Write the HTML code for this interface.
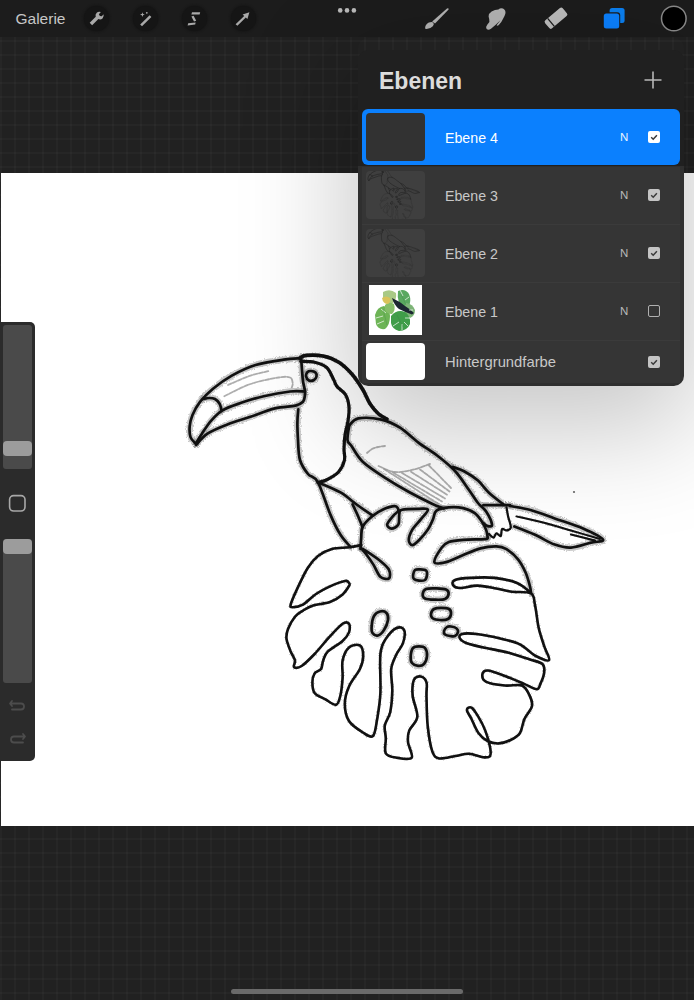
<!DOCTYPE html>
<html><head><meta charset="utf-8">
<style>
*{margin:0;padding:0;box-sizing:border-box}
html,body{width:694px;height:1000px;overflow:hidden;background:#232323;font-family:"Liberation Sans",sans-serif}
#bg{position:absolute;left:0;top:0;width:694px;height:1000px;background-color:#212121;
background-image:linear-gradient(90deg,rgba(255,255,255,0.022) 2px,transparent 2px),linear-gradient(0deg,rgba(255,255,255,0.022) 2px,transparent 2px);
background-size:14px 14px}
#top{position:absolute;left:0;top:0;width:694px;height:37px;background:#1c1c1c}
#canvas{position:absolute;left:1px;top:173px;width:693px;height:653px;background:#fff;overflow:hidden}
#shadow{position:absolute;left:358px;top:38px;width:326px;height:348px;border-radius:10px;box-shadow:0 35px 110px 10px rgba(0,0,0,0.22)}
#panel{position:absolute;left:358px;top:38px;width:326px;height:348px;background:transparent;border-radius:10px;overflow:hidden}
#panel .head{position:absolute;left:0;top:12px;width:326px;height:117px;background:#202020;border-radius:10px 10px 0 0}
#panel .body{position:absolute;left:0;top:128px;width:326px;height:220px;background:#2f2f2f}
.sep{position:absolute;left:4px;width:318px;height:1px;background:#3b3b3b}
.hdr{position:absolute;left:21px;top:29.5px;font-size:23px;font-weight:bold;color:#dcdcdc}
.row{position:absolute;left:4px;width:318px;height:57px;background:#353535}
.row.sel{background:#0b80fe;border-radius:6px;left:4px;width:318px;height:56px}
.thumb{position:absolute;left:4px;top:4px;width:59px;height:48px;background:#3f3f3f;border-radius:4px}
.lname{position:absolute;left:83px;top:20.5px;font-size:14.2px;color:#c8c8c8}
.sel .lname{color:#fff}
.N{position:absolute;left:258px;top:22px;font-size:11.5px;color:#b8b8b8}
.sel .N{color:#e8f2ff}
.cb{position:absolute;left:286px;top:22px;width:12px;height:12px;background:#c4c4c4;border-radius:2px}
.sel .cb{background:#fff}
.cb svg{position:absolute;left:0;top:0}
.cb.off{background:transparent;border:1.4px solid #b0b0b0}
#side{position:absolute;left:0;top:322px;width:35px;height:439px;background:#2b2b2b;border-radius:0 5px 5px 0}
.track{position:absolute;left:3px;width:29px;background:#4a4a4a;border-radius:3px}
.handle{position:absolute;left:3px;width:29px;height:15px;background:#9c9c9c;border-radius:4px}
.ico{position:absolute;top:6px;width:25px;height:25px;border-radius:50%;background:#151515;box-shadow:0 0 2px 1px #161616}
#home{position:absolute;left:231px;top:989px;width:232px;height:5px;border-radius:3px;background:#6a6a6a}
</style></head><body>
<div id="bg"></div>
<div id="top">
  <div style="position:absolute;left:15.5px;top:10px;font-size:15.5px;color:#c6c6c6">Galerie</div>
  <div class="ico" style="left:84px"></div>
  <div class="ico" style="left:133px"></div>
  <div class="ico" style="left:182px"></div>
  <div class="ico" style="left:231px"></div>
  <svg width="694" height="37" style="position:absolute;left:0;top:0">
    <g fill="#a9a9a9" stroke="none">
      <!-- wrench -->
      <g transform="translate(96.5 18.5) scale(0.82) translate(-96.5 -18.5)"><path d="M88.2 23.6 L95.6 16.4 A4.6 4.6 0 0 1 101.8 10.6 L99.4 13.2 L100.6 15.4 L103 15.8 L105 13.4 A4.6 4.6 0 0 1 98.8 19.2 L91.2 26.6 Z"/></g>
      <!-- wand -->
      <path d="M140.2 24.4 L149.6 15.2 L151.4 17 L142 26.2 Z"/>
      <path d="M142.4 12.2 L143 14 L144.8 14.6 L143 15.2 L142.4 17 L141.8 15.2 L140 14.6 L141.8 14 Z"/>
      <circle cx="146.8" cy="12.8" r="0.9"/>
      <!-- S selection -->
      <path d="M192 12.2 L200.2 12.2 L199.6 14.4 L191.4 14.4 Z"/>
      <path d="M191.4 16.4 L193.6 15.8 L196.2 20.8 L194 21.6 Z"/>
      <path d="M188.2 23.2 L195.6 22.4 L195.2 24.6 L187.6 25.4 Z"/>
      <!-- arrow -->
      <path d="M235.6 24.2 L244.2 16 L242.6 14.4 L249.4 12.2 L247.4 19 L245.8 17.4 L237.4 25.8 Z"/>
    </g>
    <g fill="#b9b9b9"><circle cx="340.2" cy="10.4" r="2.3"/><circle cx="347" cy="10.4" r="2.3"/><circle cx="353.9" cy="10.4" r="2.3"/></g>
    <g fill="#b4b4b4">
      <!-- brush -->
      <path d="M432.2 21.4 L447 8.4 Q448.8 7.6 448.6 9.4 L435 23.6 Z"/>
      <path d="M425.2 28.8 Q424.6 25 428.8 22.6 Q431.6 21.4 433.2 22.4 Q434.6 24 432.8 26.2 Q429.8 29.4 425.2 28.8 Z"/>
      <!-- smudge finger -->
      <path d="M486.6 29 Q485.6 26.6 487.4 24.6 L489.4 22 Q489.6 19.4 488.6 16.4 Q488.8 13 491.6 11.4 Q495 9.6 498.4 9.4 Q500.6 7.6 503 8.6 Q506 10.4 505.4 13.4 Q504.6 16.2 503.2 18.6 Q501.6 22.4 498.8 25 Q497.4 26.2 496.6 25.2 L500.4 20.2 L496 24.4 L491 28.8 Q488.4 30.4 486.6 29 Z"/>
    </g>
    <!-- eraser -->
    <g transform="translate(556 18.2) rotate(-40)">
      <rect x="-11.5" y="-5.2" width="23" height="10.4" rx="2" fill="#bdbdbd"/>
      <rect x="-7.2" y="-5.2" width="1.3" height="10.4" fill="#1c1c1c"/>
    </g>
    <!-- layers -->
    <rect x="609.6" y="8" width="15" height="15" rx="2.5" fill="#0b7ff0"/>
    <rect x="602.6" y="12.2" width="17.6" height="17.2" rx="3" fill="#1c1c1c"/>
    <rect x="603.8" y="13.4" width="15.4" height="15" rx="2.5" fill="#0b80fe"/>
    <!-- color -->
    <circle cx="673.8" cy="18.5" r="12.3" fill="#000" stroke="#8a8a8a" stroke-width="1.5"/>
  </svg>
</div>
<div id="canvas"></div>
<svg id="draw" width="694" height="1000" viewBox="0 0 694 1000" style="position:absolute;left:0;top:0"><defs><g id="art"><path d="M196.0 444.0 C195.1 442.9 191.7 440.4 190.6 437.4 C189.5 434.4 189.4 429.9 189.7 426.2 C190.0 422.5 190.8 419.1 192.5 415.0 C194.2 410.9 196.6 406.2 200.0 401.8 C203.4 397.4 207.7 393.1 213.0 388.7 C218.3 384.3 224.7 379.6 231.8 375.6 C238.9 371.7 246.9 367.6 255.6 365.0 C264.2 362.4 276.3 360.8 283.7 359.7 C291.1 358.6 297.3 358.5 300.0 358.3"/><path d="M301.0 357.0 C301.2 359.2 301.7 366.0 302.0 370.0 C302.3 374.0 302.5 377.8 303.0 381.2 C303.5 384.6 304.6 388.2 304.9 390.6 C305.2 393.0 305.2 393.4 304.9 395.3 C304.6 397.2 304.6 400.1 303.0 401.8 C301.4 403.5 300.2 404.5 295.5 405.6 C290.8 406.7 282.4 406.5 274.9 408.4 C267.4 410.3 258.3 414.1 250.5 416.8 C242.7 419.5 235.2 421.5 228.0 424.3 C220.8 427.1 212.8 430.3 207.5 433.7 C202.2 437.1 198.1 443.0 196.2 444.9"/><path d="M304.9 391.5 C302.4 391.5 296.9 390.7 290.0 391.5 C283.1 392.3 271.8 394.3 263.7 396.2 C255.6 398.1 248.1 400.4 241.2 402.8 C234.3 405.2 227.5 407.3 222.5 410.3 C217.5 413.3 214.6 416.7 211.2 420.6 C207.8 424.5 204.4 430.0 201.9 433.7 C199.4 437.4 197.1 441.4 196.2 443.0"/><path d="M202.8 399.0 C203.9 398.8 207.3 398.0 209.3 398.0 C211.3 398.0 213.3 398.1 215.0 399.0 C216.7 399.9 218.5 401.8 219.6 403.7 C220.7 405.6 221.2 409.2 221.5 410.3"/><path d="M306.0 376.0 C305.8 374.6 306.7 372.8 307.5 372.0 C308.3 371.2 309.7 370.9 311.0 371.0 C312.3 371.1 314.6 371.6 315.5 372.5 C316.4 373.4 316.8 375.2 316.5 376.5 C316.2 377.8 315.2 379.3 314.0 380.0 C312.8 380.7 310.3 381.2 309.0 380.5 C307.7 379.8 306.2 377.4 306.0 376.0Z"/><path d="M300.0 358.0 C301.0 357.6 302.2 355.7 306.0 355.4 C309.8 355.1 317.5 354.9 323.0 356.0 C328.5 357.1 333.9 359.1 338.8 362.3 C343.8 365.5 348.7 370.4 352.7 375.0 C356.7 379.6 360.1 385.2 363.0 390.0 C365.9 394.8 367.4 399.8 370.0 403.8 C372.6 407.8 375.8 411.5 378.6 414.0 C381.4 416.5 385.6 418.2 387.0 419.0" stroke-width="3.6"/><path d="M300.7 361.4 C303.0 361.5 310.3 361.3 314.6 362.3 C318.9 363.3 323.5 364.6 326.7 367.5 C329.9 370.4 331.9 376.4 333.6 379.6 C335.3 382.8 335.0 383.9 337.0 386.5 C339.0 389.1 343.7 391.6 345.7 395.0 C347.7 398.4 348.6 402.7 349.0 407.0 C349.4 411.3 348.7 416.3 348.0 421.0 C347.3 425.7 345.7 430.3 345.0 435.0 C344.3 439.7 344.1 444.8 344.0 449.0 C343.9 453.2 345.4 456.2 344.5 460.0 C343.6 463.8 341.5 468.7 338.5 472.0 C335.5 475.3 329.8 478.3 326.4 480.0 C323.0 481.7 319.4 481.9 318.0 482.3" stroke-width="3.2"/><path d="M298.3 409.3 C298.1 411.5 297.4 417.3 297.4 422.4 C297.3 427.5 297.6 433.7 298.0 440.0 C298.4 446.3 298.3 454.3 300.0 460.0 C301.7 465.7 305.0 470.3 308.0 474.0 C311.0 477.7 314.3 475.5 318.0 482.3 C321.7 489.1 326.6 505.9 330.4 514.6 C334.1 523.4 337.1 529.4 340.5 534.8 C343.9 540.2 348.9 545.0 350.6 547.0"/><path d="M318.0 482.3 C321.8 484.0 334.1 488.7 340.5 492.4 C346.9 496.1 351.2 500.6 356.6 504.5 C362.0 508.4 370.0 513.8 372.7 515.6"/><path d="M352.6 504.5 C353.5 506.4 356.4 512.2 358.0 516.0 C359.6 519.8 361.8 525.2 362.5 527.0"/><path d="M349.2 425.4 C350.7 424.2 353.0 419.4 358.4 418.4 C363.8 417.4 374.6 418.1 381.5 419.6 C388.4 421.2 393.9 423.9 400.0 427.7 C406.1 431.5 412.3 438.0 418.4 442.6 C424.5 447.2 430.7 450.6 436.8 455.3 C442.9 460.0 449.6 465.2 455.0 471.0 C460.4 476.8 465.2 484.7 469.0 490.0 C472.8 495.3 475.1 499.4 478.0 503.0 C480.9 506.6 484.0 508.1 486.3 511.7 C488.6 515.3 491.8 522.3 492.0 524.7 C492.2 527.1 489.1 526.4 487.7 526.1 C486.3 525.9 484.1 523.7 483.4 523.2"/><path d="M349.2 425.4 C348.9 427.8 347.1 436.6 347.5 440.0 C347.9 443.4 348.9 442.3 351.5 446.0 C354.1 449.7 357.2 456.6 363.0 462.0 C368.8 467.4 378.3 473.4 386.0 478.4 C393.7 483.4 401.3 487.8 409.0 492.0 C416.7 496.2 426.2 501.0 432.0 503.7 C437.8 506.4 441.8 507.6 443.7 508.4"/><path d="M453.0 467.0 C454.9 467.8 460.3 469.2 464.5 471.5 C468.7 473.8 473.9 477.0 478.0 480.6 C482.1 484.2 484.9 489.0 489.2 493.0 C493.5 497.0 501.2 502.6 503.6 504.5"/><path d="M483.4 505.2 C487.8 505.2 505.6 505.2 510.0 505.2"/><path d="M510.0 506.0 C513.4 506.7 523.0 507.9 530.5 510.0 C538.0 512.1 546.0 515.3 554.7 518.4 C563.5 521.5 575.0 525.0 583.0 528.5 C591.0 532.0 601.7 537.2 603.0 539.6 C604.3 542.0 596.3 541.3 591.0 542.6 C585.7 543.9 577.0 547.3 571.0 547.6 C565.0 547.9 560.8 546.8 554.7 544.6 C548.6 542.4 541.2 537.5 534.5 534.5 C527.8 531.5 517.8 527.8 514.4 526.5"/><path d="M516.4 516.4 C521.2 517.5 535.9 520.6 545.0 523.0 C554.1 525.4 561.8 527.8 571.0 530.5 C580.2 533.2 595.2 537.6 600.0 539.0" stroke-width="2.0"/><path d="M571.0 534.5 C575.0 535.5 591.0 539.6 595.0 540.6" stroke-width="2.2"/><path d="M506.5 507.4 C506.8 508.8 507.3 512.6 508.0 516.0 C508.7 519.4 511.1 525.1 510.8 527.5 C510.6 529.9 507.9 530.1 506.5 530.4 C505.1 530.6 503.1 528.0 502.1 529.0 C501.1 530.0 501.6 535.5 500.7 536.2 C499.8 536.9 497.6 533.1 496.4 533.3 C495.2 533.5 494.7 537.5 493.5 537.6 C492.3 537.7 489.8 534.6 489.0 534.0" stroke-width="2.2"/><path d="M360.5 549.0 C360.6 547.2 360.8 541.7 361.2 538.0 C361.6 534.3 360.8 530.4 362.7 526.7 C364.6 523.0 368.9 519.0 372.5 516.0 C376.1 513.0 380.9 510.4 384.6 508.8 C388.4 507.2 392.7 505.9 395.0 506.2 C397.3 506.5 398.7 509.0 398.4 510.6 C398.1 512.2 395.1 513.5 393.2 515.8 C391.3 518.1 387.5 522.2 387.2 524.4 C386.9 526.5 389.6 528.7 391.5 528.7 C393.4 528.7 397.1 526.9 398.4 524.4 C399.7 521.9 398.7 516.5 399.3 514.0 C399.9 511.6 398.7 510.6 402.0 509.7 C405.3 508.8 414.9 508.8 419.2 508.8 C423.5 508.8 427.6 508.0 427.9 509.7 C428.2 511.4 423.6 515.9 421.0 519.2 C418.4 522.5 414.3 526.1 412.3 529.6 C410.3 533.1 408.8 537.4 408.8 540.0 C408.8 542.6 410.6 545.2 412.3 545.2 C414.0 545.2 416.6 542.6 419.2 540.0 C421.8 537.4 425.6 533.1 427.9 529.6 C430.2 526.1 431.6 522.4 433.0 519.2 C434.4 516.0 433.9 512.6 436.5 510.6 C439.1 508.6 444.4 507.8 448.8 507.4 C453.2 507.0 458.9 507.2 463.2 508.1 C467.5 509.1 471.7 510.8 474.8 513.1 C477.9 515.4 480.1 518.9 482.0 521.8 C483.9 524.7 485.4 527.8 486.3 530.4 C487.2 533.0 487.5 536.4 487.7 537.6"/><path d="M361.0 548.0 C361.8 549.0 363.9 551.2 366.0 554.0 C368.1 556.8 371.0 560.8 373.4 564.6 C375.8 568.4 377.7 574.4 380.3 576.7 C382.9 579.0 387.6 579.5 389.0 578.4 C390.4 577.2 390.4 572.7 389.0 569.8 C387.6 566.9 384.6 564.5 380.3 561.0 C376.0 557.5 365.9 551.0 363.0 549.0"/><path d="M487.7 537.6 C487.2 537.9 488.9 538.7 484.8 539.1 C480.7 539.5 469.2 539.3 463.2 539.8 C457.2 540.3 452.4 540.7 448.8 542.0 C445.2 543.3 444.0 544.4 441.6 547.7 C439.2 551.1 433.7 559.7 434.4 562.1 C435.1 564.5 441.2 563.3 446.0 562.1 C450.8 560.9 457.4 557.3 463.2 555.0 C468.9 552.7 475.0 549.9 480.5 548.4 C486.0 546.9 492.1 546.2 496.4 546.3 C500.7 546.4 502.9 547.0 506.5 549.2 C510.1 551.4 514.8 555.4 518.0 559.3 C521.2 563.2 523.7 568.2 525.7 572.7 C527.7 577.2 529.1 583.1 530.0 586.5 C530.9 589.9 530.8 591.9 531.0 593.0"/><path d="M531.0 593.0 C528.7 591.3 523.1 585.5 517.0 583.0 C510.9 580.5 502.4 578.8 494.6 577.9 C486.8 577.0 477.0 577.5 470.4 577.9 C463.8 578.2 457.9 578.8 455.0 580.0 C452.1 581.2 452.2 583.7 453.0 585.0 C453.8 586.3 455.9 587.9 460.0 588.0 C464.1 588.1 471.5 585.6 477.3 585.6 C483.1 585.6 488.8 587.2 494.6 588.2 C500.4 589.2 505.9 590.8 512.0 591.7 C518.1 592.6 527.2 591.2 531.0 593.4 C534.8 595.6 533.7 599.3 535.0 605.0 C536.3 610.7 537.1 620.6 538.6 627.5 C540.1 634.4 542.5 640.8 544.2 646.2 C545.9 651.7 550.5 658.7 549.0 660.2 C547.5 661.8 539.8 658.1 534.9 655.5 C530.0 652.9 525.5 647.1 519.9 644.3 C514.3 641.5 508.4 640.4 501.2 638.7 C494.0 637.0 483.4 634.8 476.8 634.0 C470.2 633.2 464.6 633.2 461.8 634.0 C459.0 634.8 459.1 637.1 460.0 638.7 C460.9 640.3 463.1 641.9 467.5 643.4 C471.9 644.9 479.3 646.5 486.2 648.0 C493.1 649.5 501.5 650.8 508.7 652.7 C515.9 654.6 523.7 657.4 529.3 659.3 C534.9 661.2 539.9 661.8 542.4 664.0 C544.9 666.2 544.5 669.1 544.2 672.4 C543.9 675.7 541.8 680.8 540.5 683.6 C539.2 686.4 539.5 689.3 536.7 689.3 C533.9 689.3 528.9 685.8 523.6 683.6 C518.3 681.4 510.8 678.2 504.9 676.0 C499.0 673.8 491.8 670.8 488.0 670.5 C484.2 670.2 482.7 672.4 482.4 674.3 C482.1 676.2 482.4 679.9 486.2 681.8 C489.9 683.7 499.0 684.9 504.9 685.5 C510.8 686.1 517.7 683.9 521.8 685.5 C525.9 687.1 527.6 691.5 529.3 694.9 C531.0 698.3 532.8 702.0 532.0 706.0 C531.2 710.0 526.4 714.5 524.4 719.0 C522.4 723.5 522.3 729.5 520.0 733.0 C517.7 736.5 514.1 738.3 510.6 740.0 C507.1 741.7 502.8 743.2 499.0 743.4 C495.2 743.6 491.0 742.7 487.6 741.0 C484.2 739.3 481.1 736.7 478.4 733.0 C475.7 729.3 473.4 722.8 471.5 719.0 C469.6 715.2 466.9 711.9 466.9 710.0 C466.9 708.1 469.6 706.5 471.5 707.6 C473.4 708.7 476.1 713.0 478.4 716.8 C480.7 720.6 483.4 725.6 485.3 730.6 C487.2 735.6 489.2 742.6 490.0 746.8 C490.8 751.0 491.2 754.3 490.0 756.0 C488.8 757.7 486.5 757.6 483.0 757.2 C479.5 756.8 473.6 753.9 469.0 753.7 C464.4 753.5 460.3 755.2 455.3 756.0 C450.3 756.8 443.0 759.2 439.2 758.4 C435.4 757.6 434.2 756.8 432.3 751.4 C430.4 746.0 428.7 735.2 427.7 726.0 C426.7 716.8 426.7 703.3 426.5 696.0 C426.3 688.7 427.5 685.5 426.5 682.3 C425.5 679.0 422.8 676.9 420.7 676.5 C418.6 676.1 415.1 676.8 413.8 680.0 C412.5 683.2 412.1 689.9 412.7 696.0 C413.3 702.1 417.9 711.0 417.3 716.8 C416.7 722.6 410.8 726.4 409.2 730.6 C407.6 734.8 407.6 737.7 408.0 742.2 C408.4 746.7 413.6 755.1 411.7 757.7 C409.8 760.3 400.9 758.4 396.6 757.7 C392.3 757.0 387.6 756.5 385.8 753.3 C384.0 750.0 386.0 742.9 385.8 738.2 C385.6 733.5 384.1 729.6 384.8 725.3 C385.5 721.0 388.9 718.1 390.2 712.3 C391.4 706.5 392.1 697.9 392.3 690.7 C392.5 683.5 390.5 675.1 391.2 669.0 C391.9 662.9 394.6 658.3 396.6 654.0 C398.6 649.7 401.7 647.2 403.0 643.2 C404.3 639.2 405.3 632.7 404.2 630.2 C403.1 627.7 399.7 626.5 396.6 628.0 C393.5 629.5 388.5 634.6 385.8 638.9 C383.1 643.2 381.3 645.0 380.4 654.0 C379.5 663.0 380.9 682.1 380.4 692.9 C379.9 703.7 378.4 711.6 377.2 718.8 C375.9 726.0 375.4 733.8 372.9 736.0 C370.4 738.2 366.0 734.3 362.0 731.8 C358.0 729.3 351.9 725.7 349.0 721.0 C346.1 716.3 344.8 709.5 344.8 703.7 C344.8 697.9 346.5 692.2 349.0 686.4 C351.5 680.6 357.5 674.1 359.9 669.0 C362.3 663.9 363.2 659.9 363.2 656.0 C363.2 652.1 362.3 646.8 359.9 645.4 C357.5 644.0 351.9 645.0 349.0 647.5 C346.1 650.0 343.7 655.5 342.6 660.5 C341.5 665.5 343.0 672.0 342.6 677.8 C342.2 683.5 341.6 690.5 340.5 695.0 C339.4 699.5 338.7 704.1 336.2 704.8 C333.7 705.5 329.0 701.4 325.4 699.4 C321.8 697.4 316.8 695.9 314.6 693.0 C312.4 690.1 312.4 685.3 312.4 682.0 C312.4 678.7 313.2 675.6 314.6 673.4 C316.0 671.2 319.6 671.1 321.0 669.0 C322.4 666.9 322.1 663.4 323.2 660.5 C324.3 657.6 324.3 655.0 327.5 651.8 C330.7 648.5 339.0 644.2 342.6 641.0 C346.2 637.8 347.9 635.3 349.0 632.4 C350.1 629.5 350.1 625.2 349.0 623.8 C347.9 622.4 345.8 621.6 342.6 623.8 C339.4 625.9 334.4 631.7 329.7 636.7 C325.0 641.7 319.3 649.1 314.6 654.0 C309.9 658.9 305.0 663.8 301.6 666.0 C298.2 668.2 295.1 667.9 294.0 667.0 C292.9 666.1 295.5 663.0 295.0 660.5 C294.5 658.0 292.2 655.4 290.8 651.8 C289.4 648.2 287.0 642.7 286.5 638.9 C286.0 635.1 286.6 632.7 288.0 629.0 C289.4 625.3 292.5 619.8 295.0 616.7 C297.5 613.6 300.0 612.5 303.0 610.6 C306.0 608.7 308.7 606.8 313.2 605.4 C317.7 604.0 325.2 603.7 330.0 602.0 C334.8 600.3 338.8 597.7 342.0 595.0 C345.2 592.3 347.8 588.0 349.0 586.0 C350.2 584.0 349.7 583.8 349.0 583.0 C348.3 582.2 348.2 580.4 345.0 581.0 C341.8 581.6 334.8 584.2 330.0 586.4 C325.2 588.6 320.5 591.0 316.0 594.0 C311.5 597.0 306.9 602.4 303.0 604.6 C299.1 606.8 294.6 607.2 292.5 607.2 C290.4 607.2 290.1 607.2 290.7 604.6 C291.3 602.0 293.1 597.7 295.9 591.6 C298.7 585.5 304.0 573.9 307.7 568.0 C311.4 562.1 314.0 559.2 318.0 556.0 C322.0 552.8 326.7 550.5 331.9 549.0 C337.1 547.5 344.3 548.0 349.2 547.3 C354.1 546.6 359.2 545.4 361.2 545.0" stroke-width="2.6"/><path d="M413.1 575.0 C413.3 573.5 413.9 570.9 415.0 570.0 C416.1 569.1 418.2 569.3 420.0 569.4 C421.8 569.5 424.8 569.6 426.0 570.5 C427.2 571.4 427.2 573.4 427.0 575.0 C426.8 576.6 426.3 579.1 425.0 580.0 C423.7 580.9 420.8 580.8 419.0 580.6 C417.2 580.4 415.0 579.9 414.0 579.0 C413.0 578.1 412.9 576.5 413.1 575.0Z"/><path d="M422.7 594.0 C422.9 592.4 423.8 589.9 426.0 589.0 C428.2 588.1 432.7 588.3 436.0 588.4 C439.3 588.5 443.9 588.6 446.0 589.5 C448.1 590.4 448.8 592.4 448.6 594.0 C448.4 595.6 447.3 598.0 445.0 599.0 C442.7 600.0 438.3 599.8 435.0 599.7 C431.7 599.6 427.1 599.5 425.0 598.5 C422.9 597.5 422.5 595.6 422.7 594.0Z"/><path d="M431.0 614.0 C431.2 612.4 432.3 610.0 434.0 609.0 C435.7 608.0 438.5 607.8 441.0 607.8 C443.5 607.8 447.3 608.0 449.0 609.0 C450.7 610.0 451.2 612.3 451.0 614.0 C450.8 615.7 449.8 618.0 448.0 619.0 C446.2 620.0 442.5 620.1 440.0 620.0 C437.5 619.9 434.5 619.5 433.0 618.5 C431.5 617.5 430.8 615.6 431.0 614.0Z"/><path d="M444.0 631.0 C444.3 629.8 445.8 627.8 447.0 627.0 C448.2 626.2 449.5 626.3 451.0 626.5 C452.5 626.7 454.8 627.1 456.0 628.0 C457.2 628.9 458.2 630.7 458.0 632.0 C457.8 633.3 456.3 635.3 455.0 636.0 C453.7 636.7 451.7 636.2 450.0 636.0 C448.3 635.8 446.0 635.3 445.0 634.5 C444.0 633.7 443.7 632.2 444.0 631.0Z"/><path d="M371.7 626.0 C371.9 623.2 372.6 618.4 374.0 616.0 C375.4 613.6 377.9 612.0 380.0 611.5 C382.1 611.0 385.2 611.6 386.5 613.0 C387.8 614.4 388.4 617.2 388.0 620.0 C387.6 622.8 385.7 627.4 384.0 630.0 C382.3 632.6 379.9 635.0 378.0 635.5 C376.1 636.0 373.6 634.6 372.5 633.0 C371.4 631.4 371.4 628.8 371.7 626.0Z"/><path d="M410.7 656.0 C410.9 653.5 411.6 649.6 413.0 648.0 C414.4 646.4 417.0 646.4 419.0 646.4 C421.0 646.4 423.7 646.4 425.0 648.0 C426.3 649.6 427.2 653.3 427.0 656.0 C426.8 658.7 425.5 662.4 424.0 664.0 C422.5 665.6 420.0 666.1 418.0 665.9 C416.0 665.7 413.2 664.6 412.0 663.0 C410.8 661.4 410.5 658.5 410.7 656.0Z"/></g></defs><g fill="none" stroke-linecap="round" stroke-linejoin="round"><defs><filter id="rough" x="-5%" y="-5%" width="110%" height="110%"><feTurbulence type="fractalNoise" baseFrequency="0.9" numOctaves="2" seed="3" result="n"/><feDisplacementMap in="SourceGraphic" in2="n" scale="4" xChannelSelector="R" yChannelSelector="G"/></filter></defs><g filter="url(#rough)"><use href="#art" stroke="#666" stroke-opacity="0.36" stroke-width="6.5"/></g></g><g fill="none" stroke="#9a9a9a" stroke-width="1.8" stroke-opacity="0.8" stroke-linecap="round" stroke-dasharray="4 1.5"><path d="M224.3 396.2 C228.7 394.2 241.4 387.1 250.5 384.0 C259.6 380.9 272.0 378.6 278.6 377.5 C285.2 376.4 287.6 376.6 290.0 377.5 C292.4 378.4 292.4 381.4 292.7 383.1 C293.0 384.8 291.9 387.0 291.7 387.8"/><path d="M228.0 385.0 C231.8 383.4 243.6 377.9 250.5 375.6 C257.4 373.3 266.2 371.8 269.3 371.0"/><path d="M384.0 469.0 C393.1 474.8 429.5 498.2 438.6 504.0"/><path d="M393.0 472.5 C401.2 477.3 433.8 496.7 442.0 501.5"/><path d="M402.0 473.0 C409.2 477.2 437.8 494.2 445.0 498.5"/><path d="M411.0 471.8 C417.1 475.7 441.4 491.1 447.5 495.0"/><path d="M420.0 469.5 C424.9 473.2 444.6 487.8 449.5 491.5"/><path d="M429.0 465.5 C432.7 469.2 447.3 484.2 451.0 488.0"/><path d="M378.6 466.0 C381.2 467.0 388.8 471.4 394.5 472.0 C400.2 472.6 406.8 471.1 412.9 469.7 C419.0 468.3 428.0 464.6 431.0 463.6"/><path d="M367.0 453.0 C367.8 452.3 370.2 450.0 372.0 449.0 C373.8 448.0 375.8 447.5 378.0 447.0 C380.2 446.5 383.8 446.2 385.0 446.0"/></g><g fill="none" stroke="#111" stroke-width="2.7" stroke-linecap="round" stroke-linejoin="round"><use href="#art"/></g><circle cx="574" cy="492" r="1.1" fill="#666"/></svg>
<div id="shadow"></div>
<div id="panel">
  <div class="head"></div><div class="body"></div>
  <div class="hdr">Ebenen</div>
  <svg width="20" height="20" style="position:absolute;left:285px;top:32px"><path d="M10 1.5 V18.5 M1.5 10 H18.5" stroke="#b8b8b8" stroke-width="1.6"/></svg>
  <div class="row sel" style="top:71px"><div class="thumb" style="background:#323232"></div><div class="lname">Ebene 4</div><div class="N">N</div><div class="cb"><svg width="12" height="12"><path d="M3.2 6.3 L5.2 8.2 L8.9 4.2" fill="none" stroke="#3a3a3a" stroke-width="1.5"/></svg></div></div>
  <div class="row" style="top:129px"><div class="thumb"></div><div class="lname">Ebene 3</div><div class="N">N</div><div class="cb"><svg width="12" height="12"><path d="M3.2 6.3 L5.2 8.2 L8.9 4.2" fill="none" stroke="#3a3a3a" stroke-width="1.5"/></svg></div></div>
  <div class="row" style="top:187px"><div class="thumb"></div><div class="lname">Ebene 2</div><div class="N">N</div><div class="cb"><svg width="12" height="12"><path d="M3.2 6.3 L5.2 8.2 L8.9 4.2" fill="none" stroke="#3a3a3a" stroke-width="1.5"/></svg></div></div>
  <div class="row" style="top:245px"><div class="thumb" style="background:#fff;left:7px;top:2px;width:53px;height:50px;border-radius:0"></div><div class="lname">Ebene 1</div><div class="N">N</div><div class="cb off"></div></div>
  <div class="sep" style="top:186px"></div><div class="sep" style="top:244px"></div><div class="sep" style="top:302px"></div>
  <div class="row" style="top:303px;height:42px"><div class="thumb" style="background:#fff;top:2px;height:37px"></div><div class="lname" style="top:12.5px;font-size:14.8px">Hintergrundfarbe</div><div class="cb" style="top:15px"><svg width="12" height="12"><path d="M3.2 6.3 L5.2 8.2 L8.9 4.2" fill="none" stroke="#3a3a3a" stroke-width="1.5"/></svg></div></div>
  <svg width="326" height="348" style="position:absolute;left:0;top:0"><defs><clipPath id="c3"><rect x="8" y="133" width="59" height="48" rx="4"/></clipPath><clipPath id="c2"><rect x="8" y="191" width="59" height="48" rx="4"/></clipPath></defs><g fill="none" stroke="#262626" stroke-width="8" stroke-opacity="0.7" stroke-linecap="round" stroke-linejoin="round"><g clip-path="url(#c3)"><use href="#art" transform="matrix(0.125 0 0 0.125 -13.75 87)"/></g><g clip-path="url(#c2)"><use href="#art" transform="matrix(0.125 0 0 0.125 -13.75 145)" stroke-opacity="0.55"/></g></g><defs><filter id="bl" x="-20%" y="-20%" width="140%" height="140%"><feGaussianBlur stdDeviation="0.5"/></filter></defs>
<g transform="translate(11 247)"><g filter="url(#bl)">
<path d="M14 7 Q21 3 27 8 Q28 14 24 18 Q18 19 14 15 Z" fill="#a9c985"/>
<path d="M29 6 Q36 3 40 9 Q43 16 39 23 Q33 24 30 18 Q28 12 29 6 Z" fill="#5aa860"/>
<path d="M37 18 Q44 19 46 25 Q46 31 41 33 Q36 30 35 24 Z" fill="#7db477"/>
<path d="M6 30 Q8 22 15 21 Q21 23 21 31 Q21 40 16 44 Q9 45 7 39 Z" fill="#6db457"/>
<path d="M22 31 Q28 24 36 27 Q42 31 41 39 Q38 46 30 46 Q23 44 22 38 Z" fill="#3f9d48"/>
<path d="M16 20 Q20 16 25 19 Q27 25 23 29 Q18 29 16 25 Z" fill="#86be69"/>
<path d="M13 13 Q17 10 21 13 Q22 17 19 19 Q14 19 13 13 Z" fill="#d9c35a"/>
<path d="M23 13 Q30 16 36 21 Q41 24 45 28 L43 29.5 Q36 27 30 24 Q25 20 23 13 Z" fill="#1c2630"/>
</g>
<g stroke="#ffffff" stroke-width="0.9" stroke-opacity="0.75" fill="none"><path d="M7 33 L14 31 M8 39 L15 36 M12 24 L17 28 M24 41 L30 37 M33 45 L33 39 M39 41 L35 37 M41 33 L36 33 M31 5 L34 11 M40 12 L36 15 M44 25 L40 25"/></g><g stroke="#2f7a3a" stroke-width="0.5" stroke-opacity="0.5" fill="none"><path d="M14 24 L18 40 M28 30 L34 42 M32 9 L37 20"/></g>
</g></svg>
</div>
<div id="side">
  <div class="track" style="top:3px;height:144px"></div>
  <div class="handle" style="top:119px"></div>
  <svg width="20" height="20" style="position:absolute;left:8px;top:172px"><rect x="1.6" y="1.6" width="15.4" height="15.4" rx="4" fill="none" stroke="#a8a8a8" stroke-width="1.6"/></svg>
  <div class="track" style="top:217px;height:144px"></div>
  <div class="handle" style="top:217px"></div>
  <svg width="35" height="60" style="position:absolute;left:0;top:372px">
    <g fill="none" stroke="#4c4c4c" stroke-width="1.8" stroke-linecap="round" stroke-linejoin="round">
      <path d="M12 7 L10 9.5 L12 12 M10.5 9.5 H21 Q24 9.5 24 12.5 Q24 15.5 21 15.5 H12"/>
      <path d="M23 40 L25 42.5 L23 45 M24.5 42.5 H14 Q11 42.5 11 45.5 Q11 48.5 14 48.5 H23"/>
    </g>
  </svg>
</div>
<div id="home"></div>
</body></html>
